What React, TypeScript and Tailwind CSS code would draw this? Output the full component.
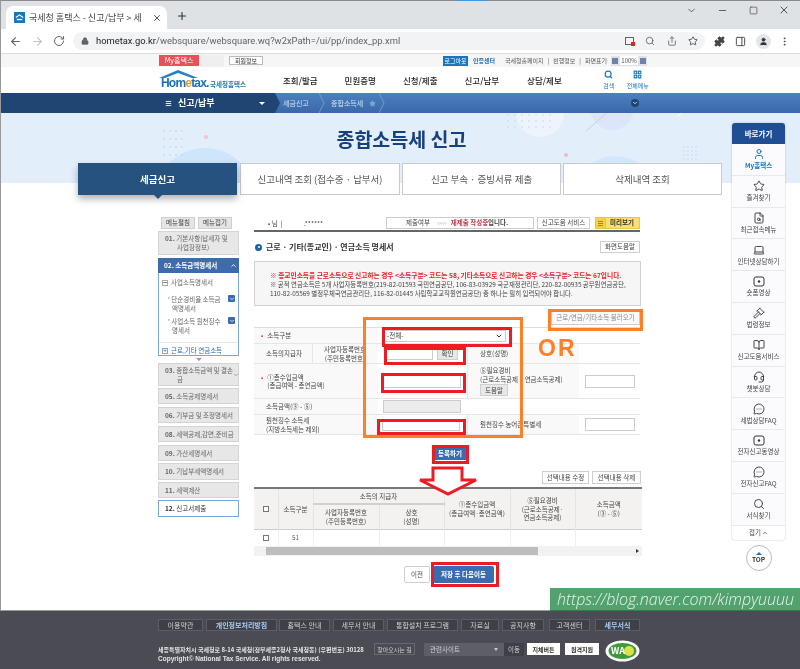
import React from "react";
import {
  ArrowLeft, ArrowRight, RotateCw, Lock, X, Plus, ChevronDown, Minus, Square, Search, Share, Star, Puzzle, PanelRight, EllipsisVertical, User,
  LayoutGrid, Laptop, Gavel, BookOpen, Headset, MessageCircleMore, FileSearch, ChevronUp, Menu,
} from "lucide-react";

const Btn = ({ children, className = "" }: { children: React.ReactNode; className?: string }) => (
  <div className={"flex items-center justify-center whitespace-nowrap border border-[#cfcfcf] bg-[#f7f7f7] text-[#444] text-[6.5px] " + className}>{children}</div>
);

const Red = ({ className = "" }: { className?: string }) => <div className={"absolute border-[3px] border-[#ed1c24] pointer-events-none " + className} />;

const VideoIcon = () => (
  <svg width="12" height="11" viewBox="0 0 12 11"><rect x="1" y="1" width="10" height="9" rx="2" fill="none" stroke="#333" /><circle cx="6" cy="5.5" r="1.2" fill="#333" /></svg>
);

function TabStrip() {
  return (
    <div className="h-[29px] bg-[#dee1e6] flex items-end pl-[6px] relative shrink-0">
      <div className="w-[161px] h-[23px] bg-white rounded-t-[7px] flex items-center pl-[8px] pr-[5px] gap-[4px]">
        <div className="w-[11px] h-[11px] bg-[#1b76b8] flex items-center justify-center shrink-0">
          <svg width="9" height="9" viewBox="0 0 10 10"><path d="M1 5 L5 2 L9 5" stroke="#fff" strokeWidth="1.2" fill="none" /><rect x="2" y="6.5" width="6" height="1.5" fill="#fff" /></svg>
        </div>
        <span className="text-[9px] text-[#444] whitespace-nowrap flex-1">국세청 홈택스 - 신고/납부 &gt; 세</span>
        <X size={10} className="text-[#333] shrink-0" />
      </div>
      <div className="ml-[9px] mb-[2px] h-[23px] flex items-center"><Plus size={12} strokeWidth={2.2} className="text-[#333]" /></div>
      <div className="flex-1" />
      <div className="flex items-center h-[29px] pb-[9px] pr-[10px] gap-[20.5px] text-[#555]">
        <ChevronDown size={11} />
        <Minus size={11} />
        <Square size={9} />
        <X size={12} />
      </div>
    </div>
  );
}

function Toolbar() {
  return (
    <div className="h-[25px] bg-white flex items-center border-b border-[#dadce0] shrink-0 pl-[9px]">
      <ArrowLeft size={13} className="text-[#5f6368]" />
      <ArrowRight size={13} className="text-[#c0c2c5] ml-[9px]" />
      <RotateCw size={12} className="text-[#5f6368] ml-[9px]" />
      <div className="ml-[8px] w-[632px] h-[18px] rounded-full bg-[#f1f3f4] flex items-center pl-[8px] pr-[7px]">
        <Lock size={8} className="text-[#5f6368]" fill="#5f6368" />
        <span className="ml-[7px] font-['Roboto',sans-serif] text-[9.4px] text-[#202124] whitespace-nowrap">hometax.go.kr<span className="text-[#5f6368]">/websquare/websquare.wq?w2xPath=/ui/pp/index_pp.xml</span></span>
        <div className="flex-1" />
        <div className="w-[9px] h-[8px] border border-[#5f6368] relative mr-[11px]"><div className="absolute right-[-2px] bottom-[-2px] w-[4px] h-[4px] bg-[#e02020]" /></div>
        <Search size={10} className="text-[#5f6368] mr-[12px]" />
        <Share size={10} className="text-[#5f6368] mr-[11px]" />
        <Star size={10} className="text-[#444]" />
      </div>
      <Puzzle size={11} className="text-[#444] ml-[9px]" fill="#444" />
      <PanelRight size={11} className="text-[#444] ml-[10px]" />
      <div className="ml-[10px] w-[15px] h-[15px] rounded-full bg-[#e3e6ea] flex items-center justify-center"><User size={9} className="text-[#333]" fill="#333" /></div>
      <EllipsisVertical size={11} className="text-[#444] ml-[8px]" />
    </div>
  );
}

function UtilStrip() {
  return (
    <div className="h-[13px] bg-[#f6f6f6] shrink-0 flex items-center pl-[159px] relative text-[6px] text-[#555] whitespace-nowrap">
      <div className="w-[40px] h-[11px] bg-[#e9505a] text-white text-[7px] flex items-center justify-center">My홈택스</div>
      <div className="w-[25px] h-[15px] bg-[#efefef] self-start mt-[1px]" />
      <div className="ml-[5px] w-[34px] h-[9px] border border-[#bbb] bg-white flex items-center justify-center text-[#333]">회원정보</div>
      <div className="ml-[180px] w-[25px] h-[10px] bg-[#1b75bb] text-white flex items-center justify-center">로그아웃</div>
      <div className="ml-[5px] text-[#1b75bb] font-bold w-[28px]">인증센터</div>
      <div className="ml-[4px] flex gap-[4px]"><span>국세청홈페이지</span><span>|</span><span>빈행정보</span><span>|</span><span>화면표기</span></div>
      <div className="ml-[4px] w-[36px] h-[10px] bg-[#dfe3e8] flex items-center justify-between px-[1px]">
        <div className="w-[6px] h-[6px] bg-[#6d84a8]" /><span className="bg-white px-[1px]">100%</span><div className="w-[6px] h-[6px] bg-[#6d84a8]" />
      </div>
    </div>
  );
}

function Header() {
  const items: [string, string][] = [["조회/발급", "ml-[33px]"], ["민원증명", "ml-[27px]"], ["신청/제출", "ml-[27px]"], ["신고/납부", "ml-[27px]"], ["상담/제보", "ml-[28px]"]];
  return (
    <div className="h-[26px] bg-white shrink-0 flex items-center pl-[158px] relative">
      <div className="w-[92px] h-[26px] relative font-['Liberation_Sans',sans-serif]">
        <svg className="absolute left-0 top-[2px]" width="48" height="14" viewBox="0 0 48 14"><path d="M1 9 L20 1 L40 9 L34 9 L20 4 L7 9Z" fill="#2b80bf" /></svg>
        <div className="absolute left-[3px] top-[10px] text-[12px] leading-[13px] font-bold text-[#1b6fb3] tracking-[-0.8px] whitespace-nowrap">Hom<span className="text-[#e89a3c]">e</span>tax.</div>
        <div className="absolute left-[52px] top-[12px] text-[6.5px] leading-[10px] text-[#1f7fa8] font-bold whitespace-nowrap font-['Noto_Sans_CJK_KR',sans-serif]">국세청홈택스</div>
      </div>
      {items.map(([t, c]) => <span key={t} className={"text-[8.5px] font-medium text-[#222] whitespace-nowrap " + c}>{t}</span>)}
      <div className="ml-[39px] w-[16px] flex flex-col items-center text-[#1b75bb]"><Search size={9} strokeWidth={3} /><span className="text-[6px] leading-[9px] mt-[2px] whitespace-nowrap">검색</span></div>
      <div className="ml-[7px] w-[28px] flex flex-col items-center text-[#1b75bb]"><LayoutGrid size={9} strokeWidth={3} /><span className="text-[6px] leading-[9px] mt-[2px] whitespace-nowrap">전체메뉴</span></div>
    </div>
  );
}

function NavBar() {
  return (
    <div className="h-[20px] shrink-0 flex bg-gradient-to-b from-[#4c80bf] to-[#3a68a9] items-center relative">
      <div className="w-[275px] h-full bg-[#1f4573] flex items-center pl-[165px] text-white">
        <Menu size={7} strokeWidth={3} />
        <span className="ml-[6px] text-[9px] font-bold whitespace-nowrap w-[81px]">신고/납부</span>
        <div className="w-0 h-0 border-x-[3px] border-x-transparent border-t-[3px] border-t-white" />
      </div>
      <div className="w-0 h-0 border-y-[10px] border-y-transparent border-l-[5px] border-l-[#1f4573]" />
      <span className="ml-[3px] text-[7px] text-[#d5e3f5] whitespace-nowrap w-[36px]">세금신고</span>
      <svg width="6" height="20" viewBox="0 0 6 20"><path d="M0 0 L5 10 L0 20" stroke="#6f9bd0" fill="none" /></svg>
      <span className="ml-[6px] text-[7px] text-[#d5e3f5] whitespace-nowrap">종합소득세</span>
      <Star size={7} className="ml-[6px] text-[#7fa5d6]" fill="#7fa5d6" />
      <svg className="ml-[3px]" width="6" height="20" viewBox="0 0 6 20"><path d="M0 0 L5 10 L0 20" stroke="#6f9bd0" fill="none" /></svg>
      <div className="ml-[246px] w-[8px] h-[8px] rounded-full bg-[#1f4573] flex items-center justify-center"><ChevronDown size={6} className="text-white" strokeWidth={3} /></div>
    </div>
  );
}

function Hero() {
  return (
    <div className="h-[70px] bg-[#e3eefb] relative overflow-hidden flex justify-center shrink-0">
      <svg className="absolute inset-0" width="800" height="70" viewBox="0 0 800 70">
        <circle cx="205" cy="85" r="50" fill="#cfe5fb" />
        <circle cx="205" cy="85" r="22" fill="#e3eefb" />
        <circle cx="615" cy="85" r="42" fill="#d3e7fc" />
        <circle cx="540" cy="0" r="24" fill="#edf4fd" />
        <circle cx="612" cy="-5" r="22" fill="#dde5fb" />
        <circle cx="206" cy="24" r="2" fill="#f3c2cc" />
        <circle cx="566" cy="42" r="2" fill="#f3b8c4" />
        <path d="M586 18 L624 -15" stroke="#bcd3f2" />
        <path d="M677 4 L690 -8" stroke="#fff" />
        {[0, 1, 2, 3].flatMap((r) => [0, 1, 2, 3].map((c) => <circle key={r + "-" + c} cx={164 + c * 6} cy={18 + r * 8} r="0.8" fill="#b9cfe8" />))}
        {[0, 1, 2].flatMap((r) => [0, 1, 2, 3, 4, 5, 6].map((c) => <circle key={"a" + r + c} cx={508 + c * 7} cy={2 + r * 6} r="0.8" fill="#c6d6ea" />))}
        {[0, 1, 2, 3].flatMap((r) => [0, 1, 2, 3].map((c) => <circle key={"b" + r + c} cx={684 + c * 4} cy={34 + r * 4} r="0.6" fill="#b4c8e2" />))}
      </svg>
      <h1 className="relative text-[#17407e] text-[19.5px] font-bold leading-[26px] mt-[13px] ml-[3px] whitespace-nowrap">종합소득세 신고</h1>
    </div>
  );
}

function Tabs() {
  const cls = "h-[32px] bg-white border border-[#c9c9cf] text-[#555] text-[9.5px] flex items-center justify-center whitespace-nowrap";
  return (
    <div className="relative mt-[-20px] h-[32px] pl-[78px] flex shrink-0">
      <div className="relative w-[159px] h-[32px] bg-[#26527f] text-white text-[9.5px] font-bold flex items-center justify-center shadow-[0_4px_7px_rgba(0,0,0,0.3)]">
        세금신고
        <div className="absolute bottom-[-4px] left-[76px] w-0 h-0 border-x-[4px] border-x-transparent border-t-[4px] border-t-[#26527f]" />
      </div>
      <div className={cls + " w-[160px] ml-[3px]"}>신고내역 조회 (접수중 · 납부서)</div>
      <div className={cls + " w-[159px] ml-[2px]"}>신고 부속 · 증빙서류 제출</div>
      <div className={cls + " w-[159px] ml-[2px]"}>삭제내역 조회</div>
    </div>
  );
}

function SideItem({ children, className = "" }: { children: React.ReactNode; className?: string }) {
  return <div className={"w-[81px] bg-[#e7e7e7] border border-[#d4d4d4] text-[#666] text-[6.5px] leading-[9px] pl-[6px] flex items-center whitespace-nowrap overflow-hidden " + className}>{children}</div>;
}

function SideMenu() {
  return (
    <div className="w-[81px] pt-[22px] flex flex-col shrink-0">
      <div className="flex gap-[3px] pl-[3px]">
        <Btn className="w-[34px] h-[12px] !bg-[#e5e5e5]">메뉴펼침</Btn>
        <Btn className="w-[34px] h-[12px] !bg-[#e5e5e5]">메뉴접기</Btn>
      </div>
      <SideItem className="h-[24px] mt-[2px]"><span><b>01.</b> 기본사항(납세자 및<br /><span className="pl-[12px]">사업장정보)</span></span></SideItem>
      <div className="w-[81px] h-[15px] mt-[3px] bg-[#3c6cab] text-white text-[6.5px] font-bold flex items-center pl-[6px] justify-between pr-[2px]">02. 소득금액명세서 <ChevronUp size={7} strokeWidth={3} /></div>
      <div className="w-[81px] h-[83px] bg-white border-x border-b border-[#7fa5d6] text-[6.5px] leading-[9px] text-[#666] flex flex-col whitespace-nowrap">
        <div className="flex items-center gap-[3px] pl-[3px] mt-[5px]"><div className="w-[6px] h-[6px] border border-[#aaa] flex items-center justify-center"><div className="w-[4px] h-px bg-[#888]" /></div>사업소득명세서</div>
        <div className="mt-[8px] pl-[9px] relative pr-[10px]">' 단순경비율 소득금<br /><span className="pl-[4px]">액명세서</span><div className="absolute right-[3px] top-0 w-[7px] h-[7px] bg-[#3c6cab] rounded-[1px] flex items-center justify-center"><ChevronDown size={6} strokeWidth={3} className="text-white" /></div></div>
        <div className="mt-[4px] pl-[9px] relative pr-[10px]">' 사업소득 원천징수<br /><span className="pl-[4px]">명세서</span><div className="absolute right-[3px] top-0 w-[7px] h-[7px] bg-[#3c6cab] rounded-[1px] flex items-center justify-center"><ChevronDown size={6} strokeWidth={3} className="text-white" /></div></div>
        <div className="mt-[7px] border-t border-[#e5e5e5] pt-[3px] flex items-center gap-[3px] pl-[3px] text-[#2f68ad]"><div className="w-[6px] h-[6px] border border-[#7fa5d6] flex items-center justify-center"><Plus size={5} strokeWidth={3} /></div>근로,기타 연금소득</div>
      </div>
      <div className="h-[7px] flex justify-center pt-[2px]"><div className="w-0 h-0 border-x-[3px] border-x-transparent border-t-[3px] border-t-[#999]" /></div>
      <SideItem className="h-[23px] pr-[2px]"><span className="flex-1"><b>03.</b> 종합소득금액 및 결손<br /><span className="pl-[12px]">금</span></span><ChevronDown size={6} className="shrink-0" /></SideItem>
      <SideItem className="h-[16px] mt-[2px]"><b>05.</b>&nbsp;소득공제명세서</SideItem>
      <SideItem className="h-[16px] mt-[3px]"><b>06.</b>&nbsp;기부금 및 조정명세서</SideItem>
      <SideItem className="h-[16px] mt-[3px]"><b>08.</b>&nbsp;세액공제,감면,준비금</SideItem>
      <SideItem className="h-[16px] mt-[3px]"><b>09.</b>&nbsp;가산세명세서</SideItem>
      <SideItem className="h-[17px] mt-[2px]"><b>10.</b>&nbsp;기납부세액명세서</SideItem>
      <SideItem className="h-[16px] mt-[2px]"><b>11.</b>&nbsp;세액계산</SideItem>
      <SideItem className="h-[17px] mt-[2px] !bg-white !border-[#7fa5d6] !text-[#333]"><b>12.</b>&nbsp;신고서제출</SideItem>
    </div>
  );
}

const L = ({ children, className = "" }: { children?: React.ReactNode; className?: string }) => (
  <div className={"bg-[#f9f9f9] border-b border-[#e6e6e6] text-[6.5px] leading-[8.5px] text-[#444] flex items-center whitespace-nowrap " + className}>{children}</div>
);
const C = ({ children, className = "" }: { children?: React.ReactNode; className?: string }) => (
  <div className={"bg-white border-b border-[#e6e6e6] flex items-center " + className}>{children}</div>
);
const Inp = ({ className = "" }: { className?: string }) => <div className={"h-[13px] bg-white border border-[#ccc] " + className} />;

function FormTable() {
  return (
    <div className="w-[386px] mt-[2px] border-t border-[#ddd] grid grid-cols-[58px_66px_89px_112px_61px] grid-rows-[16px_20px_35px_16px_20px]">
      <L className="col-span-2 pl-[7px]"><span className="text-[#e02020] mr-[4px]">•</span>소득구분</L>
      <C className="col-span-3 pl-[6px]">
        <div className="w-[122px] h-[12px] border border-[#ccc] flex items-center justify-between px-[2px] text-[6.5px] text-[#333]">-전체-<ChevronDown size={8} strokeWidth={3} /></div>
      </C>

      <L className="pl-[12px]">소득의지급자</L>
      <L className="pl-[11px] border-l"><span className="text-center">사업자등록번호<br />(주민등록번호)</span></L>
      <C className="pl-[8px]"><Inp className="w-[47px]" /><Btn className="ml-[4px] w-[21px] h-[12px] !bg-[#e8e8e8]">확인</Btn></C>
      <L className="pl-[12px] border-l">상호(성명)</L>
      <C className="pl-[6px]"></C>

      <L className="col-span-2 pl-[7px]"><span className="text-[#e02020] mr-[4px] self-start mt-[9px]">•</span><span>①총수입금액<br />(총급여액 - 총연금액)</span></L>
      <C className="pl-[5px]"><Inp className="w-[78px] !h-[14px]" /></C>
      <L className="pl-[12px] border-l flex-col !items-start justify-center">
        <span>⑤필요경비<br />(근로소득공제 · 연금소득공제)</span>
        <Btn className="w-[28px] h-[12px] mt-[1px] !bg-[#e8e8e8]">도움말</Btn>
      </L>
      <C className="pl-[6px]"><Inp className="w-[50px]" /></C>

      <L className="col-span-2 pl-[12px]">소득금액(③ - ⑤)</L>
      <C className="col-span-3 pl-[5px]"><div className="w-[78px] h-[13px] bg-[#ececec] border border-[#ccc]" /></C>

      <L className="col-span-2 pl-[12px] border-[#ccc]"><span>원천징수 소득세<br />(지방소득세는 제외)</span></L>
      <C className="pl-[4px] border-[#ccc]"><Inp className="w-[78px] !h-[12px]" /></C>
      <L className="pl-[12px] border-l border-[#ccc]">원천징수 농어촌특별세</L>
      <C className="pl-[6px] border-[#ccc]"><Inp className="w-[50px]" /></C>
    </div>
  );
}

function ResultTable() {
  const th = "bg-[#f3f2f0] border-r border-[#e4e4e4] text-[6.5px] leading-[8.5px] text-[#444] font-normal text-center p-0 align-middle";
  const td = "h-[17px] border-r border-[#eee] text-[6.5px] text-[#666] text-center p-0";
  const box = <div className="w-[6px] h-[6px] border border-[#777] bg-white mx-auto" />;
  return (
    <div className="w-[388px] mt-[3px]">
      <table className="w-[388px] table-fixed border-t-2 border-[#777] border-collapse">
        <colgroup>
          <col className="w-[24px]" /><col className="w-[35px]" /><col className="w-[66px]" /><col className="w-[65px]" /><col className="w-[66px]" /><col className="w-[65px]" /><col className="w-[67px]" />
        </colgroup>
        <tbody>
          <tr className="h-[16px]">
            <th rowSpan={2} className={th}>{box}</th>
            <th rowSpan={2} className={th}>소득구분</th>
            <th colSpan={2} className={th + " border-b-2 border-b-[#d0d0d0]"}>소득의 지급자</th>
            <th rowSpan={2} className={th}>①총수입금액<br />(총급여액·총연금액)</th>
            <th rowSpan={2} className={th}>⑤필요경비<br />(근로소득공제·<br />연금소득공제)</th>
            <th rowSpan={2} className={th + " border-r-0"}>소득금액<br />(③ - ⑤)</th>
          </tr>
          <tr className="h-[25px]">
            <th className={th}>사업자등록번호<br />(주민등록번호)</th>
            <th className={th}>상호<br />(성명)</th>
          </tr>
          <tr className="border-t border-[#ccc]">
            <td className={td}>{box}</td><td className={td}>51</td><td className={td} /><td className={td} /><td className={td} /><td className={td} /><td className={td + " border-r-0"} />
          </tr>
        </tbody>
      </table>
      <div className="h-[10px] bg-[#f2f2f2] flex items-center pl-[12px] pr-[3px] justify-between">
        <div className="w-[272px] h-[8px] bg-[#bdbdbd]" />
        <div className="w-0 h-0 border-y-[2px] border-y-transparent border-l-[3px] border-l-[#333]" />
      </div>
    </div>
  );
}

function FormArea() {
  return (
    <div className="w-[388px] ml-[15px] pt-[22px] flex flex-col shrink-0">
      <div className="h-[15px] border-b-2 border-[#666] flex items-start text-[6.5px] text-[#444] w-[386px]">
        <span className="ml-[14px] mt-[2px] whitespace-nowrap w-[24px]">• 님 &nbsp;|</span>
        <span className="ml-[12px] mt-[2px] whitespace-nowrap w-[82px]">.******</span>
        <div className="w-[148px] h-[12px] border border-[#ccc] flex items-center pl-[19px] whitespace-nowrap">제출여부<span className="ml-[7px] text-[#aaa]">›››››</span><b className="ml-[4px] text-[#c33b4c]">재제출 작성중</b><b>입니다.</b></div>
        <Btn className="ml-[3px] w-[53px] h-[12px] !bg-white">신고도움 서비스</Btn>
        <div className="ml-[5px] w-[45px] h-[12px] bg-[#fbe06f] border border-[#e6c94b] text-[#333] font-bold flex items-center justify-between pr-[5px] whitespace-nowrap">
          <div className="w-[10px] h-full bg-[#f4cf4a] border-r border-[#e6c94b] flex flex-col justify-center gap-px items-center"><div className="w-[5px] h-px bg-[#a58a20]" /><div className="w-[5px] h-px bg-[#a58a20]" /><div className="w-[5px] h-px bg-[#a58a20]" /></div>
          미리보기
        </div>
      </div>
      <div className="h-[12px] mt-[9px] w-[386px] flex items-center">
        <div className="w-[7px] h-[7px] ml-[1px] rounded-full bg-[#1f6fb5] border-2 border-[#1f5f9f] flex items-center justify-center"><div className="w-[2px] h-[2px] bg-white rounded-full" /></div>
        <span className="ml-[4px] text-[8px] font-bold text-[#333] whitespace-nowrap">근로 · 기타(종교인) · 연금소득 명세서</span>
        <div className="flex-1" />
        <Btn className="w-[40px] h-[12px] !bg-white">화면도움말</Btn>
      </div>
      <div className="mt-[8px] w-[387px] h-[45px] bg-[#f6f6f6] border border-[#d0d0d0] pl-[15px] pt-[9px] text-[6.4px] leading-[9px] text-[#444] whitespace-nowrap">
        <div className="text-[#ee1c25] font-bold text-[6.7px]">※ 종교인소득을 근로소득으로 신고하는 경우 &lt;소득구분&gt; 코드는 58, 기타소득으로 신고하는 경우 &lt;소득구분&gt; 코드는 67입니다.</div>
        <div>※ 공적 연금소득은 5개 사업자등록번호(219-82-01593 국민연금공단, 106-83-03929 국군재정관리단, 220-82-00935 공무원연금공단,</div>
        <div>110-82-05569 별정우체국연금관리단, 116-82-01445 사립학교교직원연금공단) 중 하나는 필히 입력되어야 합니다.</div>
      </div>
      <div className="mt-[5px] w-[386px] flex justify-end">
        <div className="w-[89px] h-[14px] bg-[#fafafa] border border-[#ccc] text-[6.5px] text-[#888] flex items-center justify-center whitespace-nowrap">근로/연금/기타소득 불러오기</div>
      </div>
      <FormTable />
      <div className="mt-[12px] flex justify-center pl-[4px]">
        <div className="w-[31px] h-[13px] bg-[#3a6cb0] text-white text-[6.5px] font-bold flex items-center justify-center whitespace-nowrap">등록하기</div>
      </div>
      <div className="mt-[11px] flex justify-end gap-[3px] w-[387px]">
        <Btn className="w-[47px] h-[13px] !bg-white">선택내용 수정</Btn>
        <Btn className="w-[49px] h-[13px] !bg-white">선택내용 삭제</Btn>
      </div>
      <ResultTable />
      <div className="mt-[10px] flex justify-center gap-[3px] pl-[2px]">
        <Btn className="w-[26px] h-[17px] !bg-white rounded-[2px]">이전</Btn>
        <div className="w-[61px] h-[17px] rounded-[2px] bg-[#3a6cb0] text-white text-[6.5px] font-bold flex items-center justify-center whitespace-nowrap">저장 후 다음이동</div>
      </div>
    </div>
  );
}

function QuickPanel() {
  const Ic = ({ children, t, blue }: { children: React.ReactNode; t: string; blue?: boolean }) => (
    <div className={"h-[31.8px] border-b border-[#e8e8ee] flex flex-col items-center justify-center " + (blue ? "text-[#1b75bb]" : "text-[#444]")}>
      {children}
      <span className={"text-[6.5px] leading-[9px] mt-[1px] whitespace-nowrap " + (blue ? "font-bold" : "")}>{t}</span>
    </div>
  );
  return (
    <div className="absolute left-[732px] top-[10px] w-[53px] flex flex-col items-center">
      <div className="w-[53px] rounded-[3px] bg-white shadow-[0_0_2px_rgba(0,0,0,0.25)] overflow-hidden">
        <div className="h-[21px] bg-[#1f4e93] text-white text-[7.5px] font-bold flex items-center justify-center">바로가기</div>
        <div className="bg-[#fbfbfe]">
          <Ic t="My홈택스" blue><User size={12} /></Ic>
          <Ic t="즐겨찾기"><Star size={12} /></Ic>
          <Ic t="최근접속메뉴"><FileSearch size={12} /></Ic>
          <Ic t="인터넷상담하기"><Laptop size={12} /></Ic>
          <Ic t="숏폼영상"><VideoIcon /></Ic>
          <Ic t="법령정보"><Gavel size={12} /></Ic>
          <Ic t="신고도움서비스"><BookOpen size={12} /></Ic>
          <Ic t="챗봇상담"><Headset size={12} /></Ic>
          <Ic t="세법상담FAQ"><MessageCircleMore size={12} /></Ic>
          <Ic t="전자신고동영상"><VideoIcon /></Ic>
          <Ic t="전자신고FAQ"><MessageCircleMore size={12} /></Ic>
          <Ic t="서식찾기"><Search size={12} /></Ic>
        </div>
        <div className="h-[14px] flex items-center justify-center text-[6.5px] text-[#444] gap-[1px]">접기 <ChevronUp size={6} strokeWidth={3} /></div>
      </div>
      <div className="mt-[5px] w-[26px] h-[26px] rounded-full border border-[#bbb] bg-white flex flex-col items-center justify-center">
        <div className="w-0 h-0 border-x-[3px] border-x-transparent border-b-[3px] border-b-[#1b75bb]" />
        <span className="text-[6.5px] leading-[8px] font-bold text-[#333]">TOP</span>
      </div>
    </div>
  );
}

function Footer() {
  const links: [string, string, boolean?][] = [
    ["이용약관", "w-[45px]"], ["개인정보처리방침", "w-[71px] ml-[3px]", true], ["홈택스 안내", "w-[51px] ml-[2px]"], ["세무서 안내", "w-[51px] ml-[3px]"],
    ["통합설치 프로그램", "w-[71px] ml-[3px]"], ["자료실", "w-[38px] ml-[3px]"], ["공지사항", "w-[42px] ml-[3px]"], ["고객센터", "w-[41px] ml-[5px]"], ["세무서식", "w-[45px] ml-[5px]", true],
  ];
  return (
    <div className="h-[59px] bg-[#4a4b53] border-t border-[#999] shrink-0 pl-[158px] pt-[8px] text-[#cfd0d4] whitespace-nowrap">
      <div className="flex">
        {links.map(([t, c, b]) => (
          <div key={t} className={"h-[12px] bg-[#3f4047] border border-[#5c5d65] text-[7px] flex items-center justify-center " + c + (b ? " text-[#a8cdf5] font-bold" : "")}>{t}</div>
        ))}
      </div>
      <div className="flex mt-[12px] items-start">
        <div className="w-[214px] text-[6px] leading-[9px] text-[#e4e4e6] pt-[2px] font-bold">
          세종특별자치시 국세청로 8-14 국세청(정부세종2청사 국세청동) (우편번호) 30128<br />
          <span className="font-['Liberation_Sans',sans-serif] text-[6.5px]">Copyright© National Tax Service. All rights reserved.</span>
        </div>
        <div className="ml-[2px] w-[41px] h-[12px] border border-[#66676f] text-[6px] flex items-center justify-center">찾아오시는 길</div>
        <div className="ml-[9px] w-[80px] h-[13px] bg-[#5d5e68] text-[6.5px] flex items-center justify-between px-[6px]">관련사이트<div className="w-0 h-0 border-x-[2px] border-x-transparent border-t-[3px] border-t-[#ccc]" /></div>
        <div className="w-[20px] h-[13px] bg-[#3f4047] text-[6.5px] flex items-center justify-center">이동</div>
        <div className="ml-[3px] w-[33px] h-[12px] bg-white text-[#333] text-[6px] font-bold flex items-center justify-center">지체버튼</div>
        <div className="ml-[5px] w-[34px] h-[12px] bg-white text-[#333] text-[6px] font-bold flex items-center justify-center">원격지원</div>
        <svg className="ml-[6px] -mt-[3px]" width="35" height="22" viewBox="0 0 35 22">
          <ellipse cx="17.5" cy="11" rx="17" ry="10.5" fill="#fff" />
          <ellipse cx="17.5" cy="11" rx="14" ry="8" fill="#3f9a3a" />
          <circle cx="24" cy="11" r="5" fill="#d9e24a" />
          <text x="6" y="14" fontSize="9" fontWeight="bold" fill="#fff">WA</text>
        </svg>
      </div>
    </div>
  );
}

function Overlays() {
  return (
    <>
      <div className="absolute left-[363px] top-[317px] w-[160px] h-[121px] border-[3px] border-[#ff7f27] pointer-events-none" />
      <div className="absolute left-[548px] top-[309px] w-[95px] h-[22px] border-[3px] border-[#ff7f27] pointer-events-none" />
      <div className="absolute left-[538px] top-[335px] text-[#ff7f27] text-[23px] leading-[26px] font-bold tracking-[2px] font-['Liberation_Sans',sans-serif]">OR</div>
      <Red className="left-[382px] top-[327px] w-[130px] h-[20px]" />
      <Red className="left-[384px] top-[347px] w-[82px] h-[18px]" />
      <Red className="left-[381px] top-[373px] w-[85px] h-[20px]" />
      <Red className="left-[377px] top-[419px] w-[89px] h-[16px]" />
      <Red className="left-[432px] top-[445px] w-[37px] h-[19px]" />
      <Red className="left-[431px] top-[562px] w-[68px] h-[25px]" />
      <svg className="absolute left-[416px] top-[465px]" width="64" height="32" viewBox="0 0 64 32">
        <path d="M17 3 H46 V15 H60 L32 29 L4 15 H17 Z" fill="#fff" stroke="#ed1c24" strokeWidth="3" />
      </svg>
      <div className="absolute left-[550px] top-[588px] w-[250px] h-[23px] bg-[#52a26f] border-b border-[#2f7d4c] text-[#e9f5ea] text-[16px] leading-[22px] italic pl-[7px] whitespace-nowrap font-['Open_Sans',sans-serif] font-light">https://blog.naver.com/kimpyuuuu</div>
      <div className="absolute left-0 top-0 w-[800px] h-px bg-[#8a8a8a]" />
      <div className="absolute left-0 top-0 w-px h-[610px] bg-[#999]" />
      <div className="absolute left-[455px] top-0 w-[32px] h-px bg-[#3c98e0]" />
    </>
  );
}

export default function App() {
  return (
    <div className="relative w-[800px] h-[669px] overflow-hidden bg-white flex flex-col font-['Noto_Sans_CJK_KR','Noto_Sans',sans-serif] blur-[0.25px]">
      <TabStrip />
      <Toolbar />
      <UtilStrip />
      <Header />
      <NavBar />
      <div className="relative h-[497px] shrink-0">
        <Hero />
        <Tabs />
        <div className="flex pl-[158px]">
          <SideMenu />
          <FormArea />
        </div>
        <QuickPanel />
      </div>
      <Footer />
      <Overlays />
    </div>
  );
}
